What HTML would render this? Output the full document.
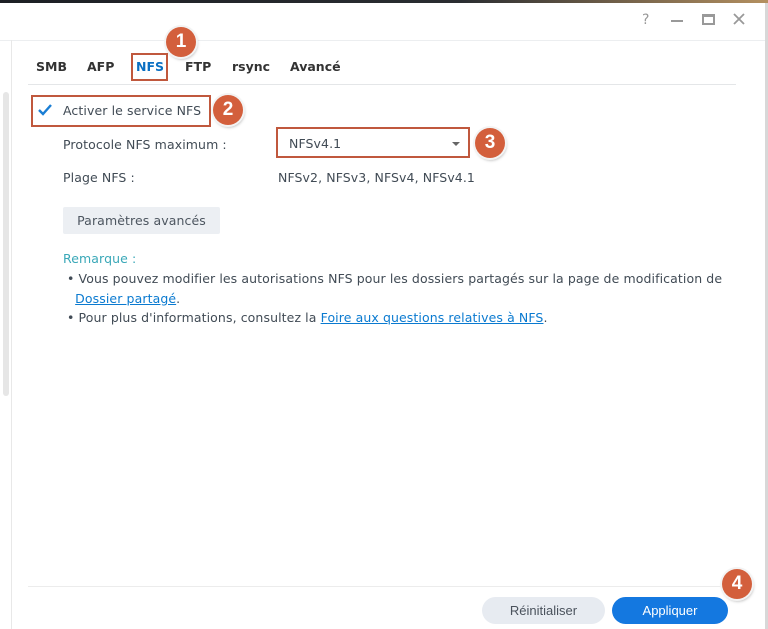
<!DOCTYPE html>
<html><head><meta charset="utf-8"><style>
*{margin:0;padding:0;box-sizing:border-box}
body{width:768px;height:629px;overflow:hidden;background:#fff;font-family:"DejaVu Sans","Liberation Sans",sans-serif;font-size:12.5px;color:#414b55;position:relative;letter-spacing:0.1px}
.a{position:absolute}
.topbar{left:0;top:0;width:768px;height:3px;background:linear-gradient(90deg,#1c1f24,#2a2d31 60%,#b49060)}
.tab{position:absolute;top:59px;font-weight:bold;font-size:12.5px;color:#333;letter-spacing:0}
.badge{position:absolute;width:30px;height:30px;border-radius:50%;background:#d35f3c;color:#fff;font-family:"Liberation Sans",sans-serif;font-weight:bold;font-size:19px;text-align:center;line-height:30px;box-shadow:0 0 0 2px #f3f3f3,1px 2px 3px rgba(0,0,0,.35);letter-spacing:0}
.red{position:absolute;border:2px solid #c0583d}
a{color:#0a7ad0;text-decoration:underline}
</style></head><body>
<div class="a topbar"></div>
<div class="a" style="left:765px;top:3px;width:3px;height:626px;background:#d8d8d8"></div>
<div class="a" style="left:0;top:40px;width:765px;height:1px;background:#eceef0"></div>
<div class="a" style="left:642px;top:12px;color:#999;font-size:14px">?</div>
<div class="a" style="left:671px;top:20px;width:12px;height:2px;background:#999"></div>
<div class="a" style="left:702px;top:14px;width:13px;height:11px;border:2px solid #999;border-top-width:3px"></div>
<svg class="a" style="left:733px;top:13px" width="12" height="12"><path d="M1 1L11 11M11 1L1 11" stroke="#999" stroke-width="1.8"/></svg>
<div class="a" style="left:11px;top:40px;width:1px;height:589px;background:#e8e8e8"></div>
<div class="a" style="left:3px;top:92px;width:6px;height:304px;border-radius:3px;background:#e6e6e6"></div>
<div class="tab" style="left:36px">SMB</div>
<div class="tab" style="left:87px">AFP</div>
<div class="tab" style="left:136px;color:#0a6fc2">NFS</div>
<div class="tab" style="left:185px">FTP</div>
<div class="tab" style="left:232px">rsync</div>
<div class="tab" style="left:290px">Avancé</div>
<div class="a" style="left:28px;top:84px;width:708px;height:1px;background:#e4e6e8"></div>
<div class="red" style="left:131px;top:53px;width:37px;height:28px"></div>
<div class="badge" style="left:166px;top:27px">1</div>
<div class="red" style="left:31px;top:95px;width:180px;height:32px"></div>
<svg class="a" style="left:37px;top:103px" width="16" height="14"><path d="M2 7 L6 11 L14 2" stroke="#1a7ed4" stroke-width="2.4" fill="none"/></svg>
<div class="a" style="left:63px;top:103px">Activer le service NFS</div>
<div class="badge" style="left:213px;top:95px">2</div>
<div class="a" style="left:63px;top:137px">Protocole NFS maximum :</div>
<div class="red" style="left:276px;top:127px;width:194px;height:31px"></div>
<div class="a" style="left:289px;top:136px">NFSv4.1</div>
<div class="a" style="left:452px;top:142px;width:0;height:0;border-left:4px solid transparent;border-right:4px solid transparent;border-top:4px solid #666"></div>
<div class="badge" style="left:475px;top:128px">3</div>
<div class="a" style="left:63px;top:170px">Plage NFS :</div>
<div class="a" style="left:278px;top:170px">NFSv2, NFSv3, NFSv4, NFSv4.1</div>
<div class="a" style="left:63px;top:207px;width:157px;height:27px;background:#eceff3;border-radius:2px;color:#4d5660;line-height:27px;text-align:center">Paramètres avancés</div>
<div class="a" style="left:63px;top:251px;color:#3aa8b8">Remarque :</div>
<div class="a" style="left:67px;top:269px;line-height:19.5px">• Vous pouvez modifier les autorisations NFS pour les dossiers partagés sur la page de modification de<br>&nbsp;&nbsp;<a>Dossier partagé</a>.<br>• Pour plus d'informations, consultez la <a>Foire aux questions relatives à NFS</a>.</div>
<div class="a" style="left:28px;top:586px;width:710px;height:1px;background:#ececec"></div>
<div class="a" style="left:482px;top:597px;width:123px;height:27px;border-radius:14px;background:#e7ebf1;color:#4a525c;text-align:center;line-height:27px;font-family:'Liberation Sans',sans-serif;font-size:13px;letter-spacing:0">Réinitialiser</div>
<div class="a" style="left:612px;top:597px;width:116px;height:27px;border-radius:14px;background:#1478e0;color:#fff;text-align:center;line-height:27px;font-family:'Liberation Sans',sans-serif;font-size:13px;letter-spacing:0">Appliquer</div>
<div class="badge" style="left:722px;top:569px">4</div>
</body></html>
